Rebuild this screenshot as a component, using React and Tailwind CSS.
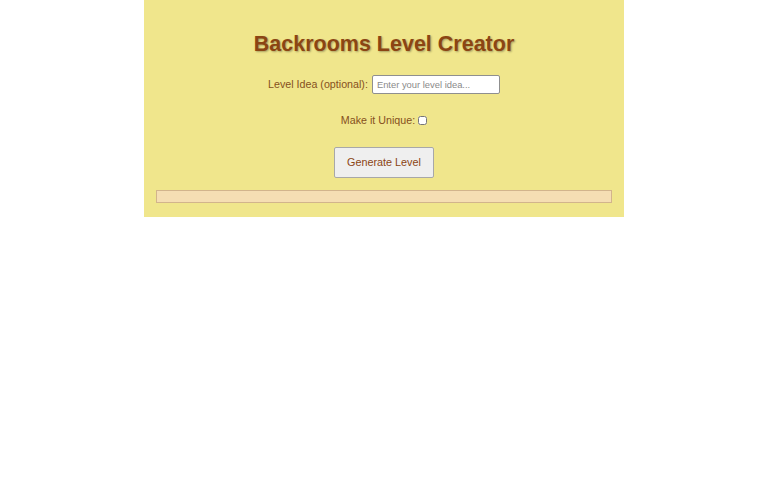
import React from 'react'

export default function App() {
  return (
    <div className="w-full min-h-[480px] bg-white font-['Liberation_Sans',Arial,sans-serif]">
      <div className="mx-auto w-[480px] bg-[#f0e68c] px-3 pt-[32px] pb-[14px] text-[#8b4513]">
        {/* Title */}
        <h1 className="text-center text-[21.5px] leading-6 font-bold [text-shadow:1px_1px_2px_rgba(0,0,0,0.3)]">
          Backrooms Level Creator
        </h1>

        {/* Level idea */}
        <div className="mt-[19px] flex items-center justify-center gap-[4px]">
          <label className="text-[10.7px] leading-none text-[#865020]">Level Idea (optional):</label>
          <input
            type="text"
            placeholder="Enter your level idea..."
            className="h-[19px] w-[128px] rounded-[2px] border border-[#8f8f8f] bg-white px-[4px] text-[9.4px] text-[#333] placeholder:text-[#8a8a8a] outline-none"
          />
        </div>

        {/* Unique toggle */}
        <div className="mt-[21px] flex items-center justify-center gap-[3px]">
          <label className="text-[10.7px] leading-none text-[#865020]">Make it Unique:</label>
          <input type="checkbox" className="m-0 h-[9px] w-[9px]" />
        </div>

        {/* Generate */}
        <div className="mt-[21px] flex justify-center">
          <button className="h-[31px] w-[100px] rounded-[2px] border border-[#a8a8a8] bg-[#efefef] text-[10.8px] text-[#8b4513]">
            Generate Level
          </button>
        </div>

        {/* Output */}
        <div className="mt-[12px] h-[13px] border border-[#d2b48c] bg-[#f5deb3]"></div>
      </div>
    </div>
  )
}
